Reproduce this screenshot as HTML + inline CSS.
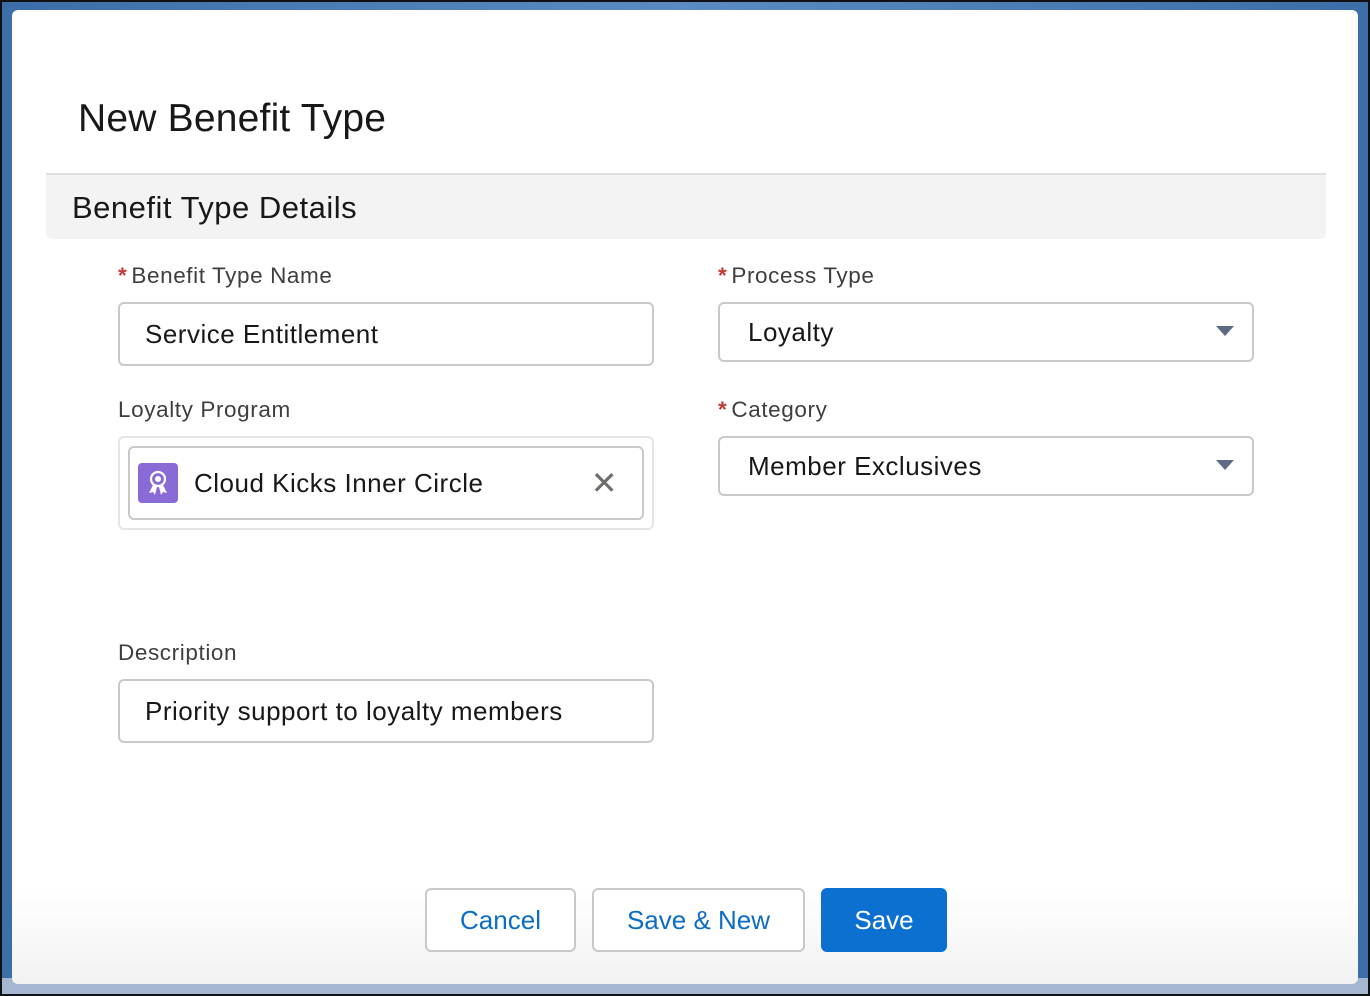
<!DOCTYPE html>
<html><head><style>
*{box-sizing:border-box;margin:0;padding:0}
body{width:1370px;height:996px;position:relative;overflow:hidden;background:#3f73ad;font-family:"Liberation Sans",Arial,sans-serif;color:#181818}
.bg{position:absolute;left:0;top:0;width:1370px;height:996px;background:linear-gradient(90deg,#3b6ea8,#5b8bc2 50%,#3b6ea8)}
.frame{position:absolute;left:0;top:0;width:1370px;height:996px;border:2px solid #111;z-index:5}
.bottomband{position:absolute;left:0;top:978px;width:1370px;height:16px;background:#a4b6d0}
.modal{position:absolute;left:12px;top:10px;width:1346px;height:974px;background:linear-gradient(#fff 0,#fff 878px,#f2f2f2 974px);border-radius:6px}
.in{position:absolute;left:0;top:2px;width:1346px;height:970px}
.abs{position:absolute}
h1{position:absolute;left:66px;top:85px;font-size:39px;font-weight:400;letter-spacing:0.2px}
.sec{position:absolute;left:34px;top:161px;width:1280px;height:66px;background:#f3f3f3;border-top:2px solid #e0e0e0;border-radius:0 0 6px 6px}
.sec span{position:absolute;left:26px;top:15px;font-size:31px;letter-spacing:0.5px}
.lbl{position:absolute;font-size:22.5px;color:#3e3e3c;letter-spacing:0.6px}
.lbl b{color:#c23934;font-weight:700;margin-right:4px}
.inp{position:absolute;border:2px solid #c9c9c9;border-radius:6px;background:#fff;font-size:26px;letter-spacing:0.5px;padding-left:25px;display:flex;align-items:center}
.tri{position:absolute;right:18px;top:22px;width:0;height:0;border-left:9px solid transparent;border-right:9px solid transparent;border-top:10px solid #5f6b85}
.btn{position:absolute;top:876px;height:64px;border:2px solid #c9c9c9;border-radius:6px;background:#fff;color:#0b6ec4;font-size:26px;display:flex;align-items:center;justify-content:center}
</style></head><body>
<div class="bg"></div><div class="bottomband"></div>
<div class="modal"><div class="in">
<h1>New Benefit Type</h1>
<div class="sec"><span>Benefit Type Details</span></div>
<div class="lbl" style="left:106px;top:251px"><b>*</b>Benefit Type Name</div>
<div class="inp" style="left:106px;top:290px;width:536px;height:64px">Service Entitlement</div>
<div class="lbl" style="left:106px;top:385px">Loyalty Program</div>
<div class="abs" style="left:106px;top:424px;width:536px;height:94px;border:2px solid #e5e5e5;border-radius:6px"></div>
<div class="inp" style="left:116px;top:434px;width:516px;height:74px;padding-left:8px">
<div style="width:40px;height:40px;background:#8a6ad6;border-radius:4px;position:relative;margin-right:16px">
<svg width="40" height="40" viewBox="0 0 40 40"><circle cx="20" cy="16" r="7" fill="none" stroke="#fff" stroke-width="2.2"/><circle cx="20" cy="16" r="3" fill="#fff"/><path d="M15 22 L11 30 L15 29 L17 32 L19 24 M25 22 L29 30 L25 29 L23 32 L21 24" fill="#fff"/></svg></div>
Cloud Kicks Inner Circle
<span style="position:absolute;right:24px;top:16px;font-size:32px;color:#706e6b">✕</span></div>
<div class="lbl" style="left:706px;top:251px"><b>*</b>Process Type</div>
<div class="inp" style="left:706px;top:290px;width:536px;height:60px;padding-left:28px">Loyalty<div class="tri"></div></div>
<div class="lbl" style="left:706px;top:385px"><b>*</b>Category</div>
<div class="inp" style="left:706px;top:424px;width:536px;height:60px;padding-left:28px">Member Exclusives<div class="tri"></div></div>
<div class="lbl" style="left:106px;top:628px">Description</div>
<div class="inp" style="left:106px;top:667px;width:536px;height:64px">Priority support to loyalty members</div>
<div class="btn" style="left:413px;width:151px">Cancel</div>
<div class="btn" style="left:580px;width:213px">Save &amp; New</div>
<div class="btn" style="left:809px;width:126px;background:#0b70d0;border-color:#0b70d0;color:#fff">Save</div>
</div></div>
<div class="frame"></div>
</body></html>
